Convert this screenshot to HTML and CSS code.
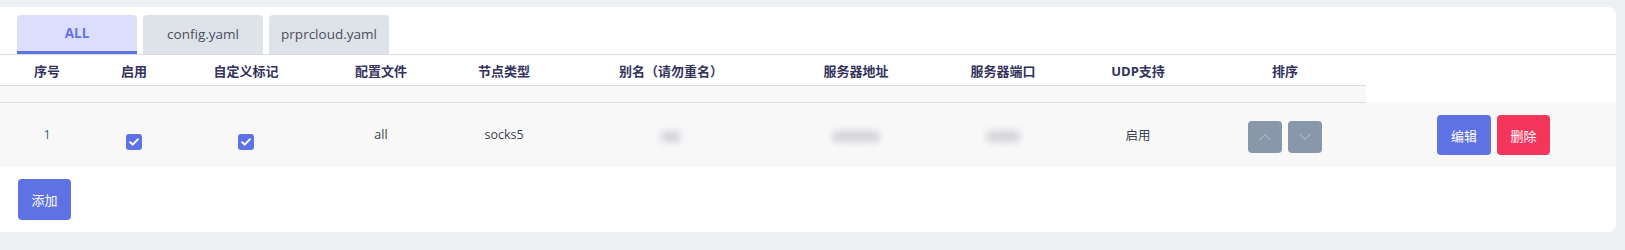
FILE: index.html
```html
<!DOCTYPE html>
<html lang="zh">
<head>
<meta charset="utf-8">
<link rel="stylesheet" href="styles.css">
</head>
<body>
<div class="card">
  <div class="tabs">
    <div class="tab active">ALL</div>
    <div class="tab">config.yaml</div>
    <div class="tab">prprcloud.yaml</div>
  </div>
  <div class="thead">
    <div class="th">序号</div>
    <div class="th">启用</div>
    <div class="th">自定义标记</div>
    <div class="th">配置文件</div>
    <div class="th">节点类型</div>
    <div class="th">别名（请勿重名）</div>
    <div class="th">服务器地址</div>
    <div class="th">服务器端口</div>
    <div class="th">UDP支持</div>
    <div class="th">排序</div>
  </div>
  <div class="spacer"></div>
  <div class="row">
    <div class="td num">1</div>
    <div class="td"><span class="check"><svg width="10" height="8" viewBox="0 0 10 8"><path d="M1.2 4.2 L3.8 6.6 L8.8 1.4" fill="none" stroke="#fff" stroke-width="2" stroke-linecap="round" stroke-linejoin="round"/></svg></span></div>
    <div class="td"><span class="check"><svg width="10" height="8" viewBox="0 0 10 8"><path d="M1.2 4.2 L3.8 6.6 L8.8 1.4" fill="none" stroke="#fff" stroke-width="2" stroke-linecap="round" stroke-linejoin="round"/></svg></span></div>
    <div class="td">all</div>
    <div class="td">socks5</div>
    <div class="td"><span class="blur b1"></span></div>
    <div class="td"><span class="blur b2"></span></div>
    <div class="td"><span class="blur b3"></span></div>
    <div class="td">启用</div>
    <div class="td sort">
      <span class="sbtn"><svg width="14" height="8" viewBox="0 0 14 8"><path d="M1.5 7 L7 1.8 L12.5 7" fill="none" stroke="#a7b3c1" stroke-width="1.2"/></svg></span>
      <span class="sbtn"><svg width="14" height="8" viewBox="0 0 14 8"><path d="M1.5 1 L7 6.2 L12.5 1" fill="none" stroke="#a7b3c1" stroke-width="1.2"/></svg></span>
    </div>
    <div class="td actions">
      <span class="btn primary">编辑</span>
      <span class="btn danger">删除</span>
    </div>
  </div>
  <div class="footer">
    <span class="btn primary add">添加</span>
  </div>
</div>
</body>
</html>
```

FILE: styles.css
```css
html, body {
  margin: 0;
  padding: 0;
}
body {
  background: #eef0f3;
  font-family: "Open Sans", "Noto Sans CJK SC", sans-serif;
  width: 1625px;
  height: 250px;
  overflow: hidden;
}
.card {
  margin-top: 7px;
  width: 1616px;
  height: 225px;
  background: #fff;
  border-radius: 0 8px 8px 0;
  box-sizing: border-box;
}
.tabs {
  display: flex;
  gap: 7px;
  padding: 8px 0 0 17px;
  border-bottom: 1px solid #dcdcdc;
}
.tab {
  width: 120px;
  height: 39px;
  box-sizing: border-box;
  background: #dee3ea;
  border-radius: 4px 4px 0 0;
  display: flex;
  align-items: center;
  justify-content: center;
  font-size: 13.5px;
  color: #4a4f5c;
  padding-bottom: 2px;
}
.tab + .tab {
  margin-left: -1px;
}
.tab.active {
  background: #dbdffb;
  color: #6673e0;
  font-weight: 700;
  border-bottom: 3px solid #5e72e4;
  padding-bottom: 0;
}
.thead {
  display: grid;
  grid-template-columns: 94px 80px 144px 126px 120px 214px 156px 138px 132px 162px;
  width: 1366px;
  height: 31px;
  box-sizing: border-box;
  border-bottom: 1px solid #dcdcdc;
}
.th {
  display: flex;
  align-items: center;
  justify-content: center;
  font-size: 13px;
  font-weight: 700;
  color: #32325d;
}
.spacer {
  width: 1366px;
  height: 16px;
  background: #f8f8f8;
  border-bottom: 1px solid #dcdcdc;
}
.row {
  display: grid;
  grid-template-columns: 94px 80px 144px 126px 120px 214px 156px 138px 132px 162px 250px;
  height: 64px;
  background: #f8f8f8;
}
.td {
  display: flex;
  align-items: center;
  justify-content: center;
  font-size: 12.5px;
  color: #3c3f4e;
  padding-bottom: 2px;
}
.td.num {
  color: #2f5f94;
}
.check {
  width: 16px;
  height: 16px;
  border-radius: 3px;
  background: #5e72e4;
  display: flex;
  align-items: center;
  justify-content: center;
  margin-top: 16px;
}
.blur {
  display: block;
  height: 11px;
  background: #d2d2da;
  border-radius: 5px;
  filter: blur(3.5px);
  margin-top: 4px;
}
.b1 { width: 20px; }
.b2 { width: 48px; }
.b3 { width: 34px; }
.sort {
  gap: 6px;
  padding-top: 4px;
  padding-bottom: 0;
}
.sbtn {
  width: 34px;
  height: 32px;
  border-radius: 4px;
  background: #8898aa;
  display: flex;
  align-items: center;
  justify-content: center;
}
.actions {
  gap: 6px;
  padding-left: 5px;
  padding-bottom: 0;
}
.btn {
  display: flex;
  align-items: center;
  justify-content: center;
  width: 54px;
  height: 40px;
  border-radius: 4px;
  color: #fff;
  font-size: 13px;
}
.btn.primary {
  background: #5e72e4;
}
.btn.danger {
  background: #f5365c;
  width: 53px;
}
.footer {
  padding: 12px 0 0 18px;
}
.btn.add {
  width: 53px;
  height: 41px;
}
```
